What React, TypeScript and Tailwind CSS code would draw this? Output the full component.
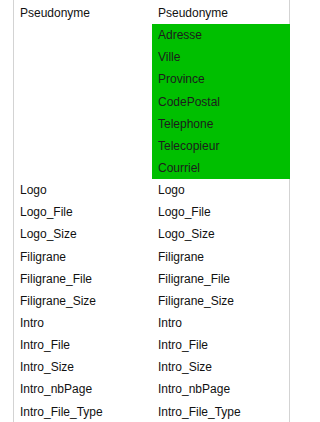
import React from "react";

const contactFields = ["Adresse", "Ville", "Province", "CodePostal", "Telephone", "Telecopieur", "Courriel"];

const mediaFields = [
  "Logo",
  "Logo_File",
  "Logo_Size",
  "Filigrane",
  "Filigrane_File",
  "Filigrane_Size",
  "Intro",
  "Intro_File",
  "Intro_Size",
  "Intro_nbPage",
  "Intro_File_Type",
];

const Row = ({ label }: { label: string }) => (
  <div className="h-[22.15px] leading-[22.15px] px-[6px] whitespace-nowrap">{label}</div>
);

export default function App() {
  return (
    <div className="w-[320px] h-[422px] overflow-hidden bg-white text-[12px] text-[#111] font-['Liberation_Sans',Arial,sans-serif]">
      <div className="ml-[13px] w-[277px] h-full border-l border-r border-[#d3d3d3] pt-[2px]">
        <div className="grid grid-cols-[138px_137px]">
          {/* colonne gauche */}
          <div>
            <Row label="Pseudonyme" />
            <div className="h-[155px]" />
            {mediaFields.map((f) => (
              <Row key={f} label={f} />
            ))}
          </div>

          {/* colonne droite */}
          <div>
            <Row label="Pseudonyme" />
            <div className="bg-[#00bf00] h-[155px] w-[138px] text-[#1c1c1c]">
              {contactFields.map((f) => (
                <Row key={f} label={f} />
              ))}
            </div>
            {mediaFields.map((f) => (
              <Row key={f} label={f} />
            ))}
          </div>
        </div>
      </div>
    </div>
  );
}
